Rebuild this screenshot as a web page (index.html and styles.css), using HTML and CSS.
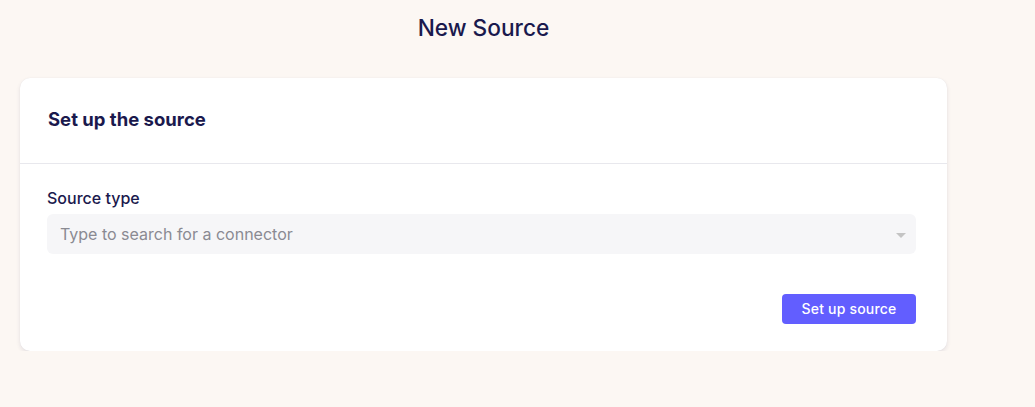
FILE: index.html
```html
<!DOCTYPE html>
<html lang="en">
<head>
<meta charset="utf-8">
<title>New Source</title>
<link rel="stylesheet" href="styles.css">
</head>
<body>
<main class="page">
  <h1 class="page-title">New Source</h1>
  <section class="card">
    <header class="card-header">
      <h2 class="card-title">Set up the source</h2>
    </header>
    <div class="card-body">
      <label class="field-label" for="source-type">Source type</label>
      <div class="select">
        <input id="source-type" class="select-input" type="text" placeholder="Type to search for a connector">
        <svg class="select-arrow" width="10" height="5" viewBox="0 0 10 5" aria-hidden="true"><path d="M0 0 H10 L5 5 Z" fill="#c4c4c4"/></svg>
      </div>
      <div class="actions">
        <button class="btn-primary" type="button">Set up source</button>
      </div>
    </div>
  </section>
</main>
</body>
</html>
```

FILE: styles.css
```css
* { box-sizing: border-box; }

html, body {
  margin: 0;
  padding: 0;
  background: #fcf7f3;
  font-family: Inter, "Noto Sans", sans-serif;
  color: #1a194d;
}

.page {
  width: 927px;
  margin-left: 20px;
  padding-top: 13px;
}

.page-title {
  margin: 0;
  text-align: center;
  font-size: 22.7px;
  font-weight: 500;
  line-height: 30px;
  color: #1a194d;
}

.card {
  margin-top: 35px;
  background: #ffffff;
  border-radius: 10px;
  box-shadow: 0 2px 4px rgba(26, 25, 77, 0.10), 0 0 1px rgba(26, 25, 77, 0.08);
}

.card-header {
  height: 86px;
  padding: 0 28px 3px;
  display: flex;
  align-items: center;
  border-bottom: 1px solid #e8e8ed;
}

.card-title {
  margin: 0;
  font-size: 18.5px;
  font-weight: 700;
  line-height: 24px;
  color: #1a194d;
}

.card-body {
  padding: 24px 31px 27px 27px;
  display: flex;
  flex-direction: column;
}

.field-label {
  font-size: 16px;
  font-weight: 500;
  line-height: 20px;
  color: #1a194d;
  margin-bottom: 6px;
}

.select {
  position: relative;
  height: 40px;
  background: #f6f6f8;
  border-radius: 6px;
}

.select-input {
  width: 100%;
  height: 100%;
  border: none;
  background: transparent;
  padding: 0 40px 0 13px;
  font-family: inherit;
  font-size: 16px;
  color: #1a194d;
  outline: none;
}

.select-input::placeholder {
  color: #8a8a92;
}

.select-arrow {
  position: absolute;
  right: 10px;
  top: 19px;
}

.actions {
  display: flex;
  justify-content: flex-end;
  margin-top: 40px;
}

.btn-primary {
  height: 30px;
  padding: 0 14px 2px;
  border: none;
  border-radius: 4px;
  background: #625eff;
  color: #ffffff;
  font-family: inherit;
  font-size: 14px;
  font-weight: 500;
  letter-spacing: 0.2px;
  width: 134px;
}
```
